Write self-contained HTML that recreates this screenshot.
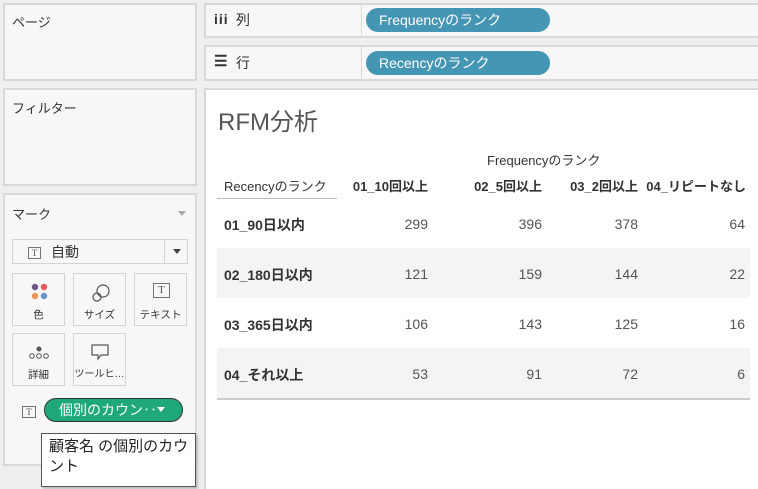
<!DOCTYPE html><html><head><meta charset="utf-8"><style>
*{box-sizing:border-box;margin:0;padding:0}
html,body{width:758px;height:489px;overflow:hidden}
body{background:#efefef;font-family:"Liberation Sans","Noto Sans CJK JP",sans-serif;color:#333;position:relative}
.b{position:absolute;background:#f7f7f7;border:2px solid #d9d9d9}
.t{position:absolute;font-size:13px;color:#333;line-height:18px}
.pill{position:absolute;background:#4596b4;color:#fff;border-radius:12px;font-size:14px;padding:3px 0 0 13px;height:24px;line-height:18px}
.cell{position:absolute;font-size:14px;line-height:20px;white-space:nowrap}
.btn{position:absolute;width:53px;height:53px;background:#f7f7f7;border:1px solid #d4d4d4;font-size:11px;text-align:center}
.lbl{position:absolute;left:0;right:0;top:34px;white-space:nowrap;font-size:10.5px;line-height:14px}
.ti{display:inline-block;width:13px;height:12px;border:1px solid #777;font-size:9px;line-height:10px;text-align:center;font-family:"Liberation Serif",serif;color:#555;vertical-align:middle}
.n{text-align:right;color:#555}
</style></head><body>
<div class="b" style="left:3px;top:3px;width:194px;height:78px"></div><div class="t" style="left:12px;top:14px">ページ</div>
<div class="b" style="left:3px;top:88px;width:194px;height:98px"></div><div class="t" style="left:12px;top:100px">フィルター</div>
<div class="b" style="left:3px;top:193px;width:194px;height:273px"></div>
<div class="t" style="left:12px;top:206px">マーク</div>
<div style="position:absolute;left:178px;top:211px;border:4px solid transparent;border-top:5px solid #aaa"></div>
<div style="position:absolute;left:12px;top:239px;width:176px;height:25px;border:1px solid #d4d4d4;background:#f7f7f7"></div>
<div style="position:absolute;left:164px;top:240px;width:1px;height:23px;background:#d4d4d4"></div>
<div style="position:absolute;left:173px;top:249px;border:4px solid transparent;border-top:5px solid #444"></div>
<div class="t" style="left:28px;top:243px"><span class="ti">T</span></div><div class="t" style="left:51px;top:243px;font-size:14px">自動</div>
<div class="btn" style="left:12px;top:273px"><svg style="position:absolute;left:18px;top:9px" width="18" height="18"><circle cx="4" cy="4" r="3.2" fill="#6b5b8c"/><circle cx="13" cy="4" r="3.2" fill="#e05a60"/><circle cx="4" cy="13" r="3.2" fill="#e59a5a"/><circle cx="13" cy="13" r="3.2" fill="#6a93c7"/></svg><div class="lbl">色</div></div>
<div class="btn" style="left:73px;top:273px"><svg style="position:absolute;left:17px;top:9px" width="20" height="20" fill="none" stroke="#555" stroke-width="1.2"><circle cx="12" cy="8" r="6"/><circle cx="6" cy="14" r="4"/></svg><div class="lbl">サイズ</div></div>
<div class="btn" style="left:134px;top:273px"><div style="position:absolute;left:18px;top:9px;width:17px;height:15px;border:1px solid #777;font-family:'Liberation Serif',serif;font-size:11px;line-height:13px;color:#555">T</div><div class="lbl">テキスト</div></div>
<div class="btn" style="left:12px;top:333px"><svg style="position:absolute;left:15px;top:12px" width="22" height="14" fill="none" stroke="#555"><circle cx="11" cy="3" r="2" fill="#555"/><circle cx="4" cy="10" r="2.3"/><circle cx="11" cy="10" r="2.3"/><circle cx="18" cy="10" r="2.3"/></svg><div class="lbl">詳細</div></div>
<div class="btn" style="left:73px;top:333px"><svg style="position:absolute;left:17px;top:10px" width="20" height="18" fill="none" stroke="#555" stroke-width="1.2"><path d="M1 1H17V11H10L7 15V11H1Z"/></svg><div class="lbl" style="font-size:10px">ツールヒ…</div></div>
<div class="t" style="left:22px;top:402px"><span class="ti" style="width:14px">T</span></div>
<div style="position:absolute;left:44px;top:398px;width:139px;height:24px;background:#1fa97a;border:1px solid #333;border-radius:12px;color:#fff;font-size:14px;line-height:18px;padding:2px 0 0 14px;white-space:nowrap">個別のカウン‥</div>
<div style="position:absolute;left:157px;top:407px;border:4px solid transparent;border-top:5px solid #fff"></div>
<div style="position:absolute;left:41px;top:433px;width:155px;height:54px;background:#fff;border:1px solid #555;box-shadow:2px 2px 2px #bbb;font-size:15px;line-height:20px;padding:3px 0 0 7px;color:#222">顧客名 の個別のカウ<br>ント</div>
<div class="b" style="left:204px;top:3px;width:560px;height:35px"></div>
<div style="position:absolute;left:361px;top:5px;width:1px;height:31px;background:#d9d9d9"></div>
<div class="t" style="left:214px;top:10px;font-size:14px;font-weight:bold;letter-spacing:1px">iii</div><div class="t" style="left:236px;top:11px;font-size:14px">列</div>
<div class="pill" style="left:366px;top:8px;width:184px">Frequencyのランク</div>
<div class="b" style="left:204px;top:45px;width:560px;height:36px"></div>
<div style="position:absolute;left:361px;top:47px;width:1px;height:32px;background:#d9d9d9"></div>
<div class="t" style="left:214px;top:53px;font-size:15px;font-weight:bold">☰</div><div class="t" style="left:236px;top:54px;font-size:14px">行</div>
<div class="pill" style="left:366px;top:51px;width:184px">Recencyのランク</div>
<div style="position:absolute;left:204px;top:88px;width:560px;height:410px;background:#fff;border:2px solid #d9d9d9"></div>
<div class="t" style="left:218px;top:108px;font-size:24px;line-height:30px;color:#555">RFM分析</div>
<div class="cell" style="left:487px;top:151px;font-size:13px">Frequencyのランク</div>
<div class="cell" style="left:224px;top:177px;font-size:13px">Recencyのランク</div>
<div style="position:absolute;left:217px;top:198px;width:120px;height:1px;background:#bbb"></div>
<div style="position:absolute;left:217px;top:248px;width:533px;height:50px;background:#f4f4f4"></div>
<div style="position:absolute;left:217px;top:348px;width:533px;height:50px;background:#f4f4f4"></div>
<div style="position:absolute;left:217px;top:398px;width:533px;height:2px;background:#ccc"></div>
<div class="cell" style="left:340px;top:177px;width:88px;text-align:right;font-weight:bold;font-size:13px">01_10回以上</div>
<div class="cell" style="left:440px;top:177px;width:102px;text-align:right;font-weight:bold;font-size:13px">02_5回以上</div>
<div class="cell" style="left:540px;top:177px;width:98px;text-align:right;font-weight:bold;font-size:13px">03_2回以上</div>
<div class="cell" style="left:640px;top:177px;width:106px;text-align:right;font-weight:bold;font-size:13px">04_リピートなし</div>
<div class="cell" style="left:224px;top:215px;font-weight:bold">01_90日以内</div>
<div class="cell" style="left:224px;top:265px;font-weight:bold">02_180日以内</div>
<div class="cell" style="left:224px;top:315px;font-weight:bold">03_365日以内</div>
<div class="cell" style="left:224px;top:365px;font-weight:bold">04_それ以上</div>
<div class="cell n" style="left:348px;top:214px;width:80px">299</div><div class="cell n" style="left:440px;top:214px;width:102px">396</div><div class="cell n" style="left:540px;top:214px;width:98px">378</div><div class="cell n" style="left:640px;top:214px;width:105px">64</div>
<div class="cell n" style="left:348px;top:264px;width:80px">121</div><div class="cell n" style="left:440px;top:264px;width:102px">159</div><div class="cell n" style="left:540px;top:264px;width:98px">144</div><div class="cell n" style="left:640px;top:264px;width:105px">22</div>
<div class="cell n" style="left:348px;top:314px;width:80px">106</div><div class="cell n" style="left:440px;top:314px;width:102px">143</div><div class="cell n" style="left:540px;top:314px;width:98px">125</div><div class="cell n" style="left:640px;top:314px;width:105px">16</div>
<div class="cell n" style="left:348px;top:364px;width:80px">53</div><div class="cell n" style="left:440px;top:364px;width:102px">91</div><div class="cell n" style="left:540px;top:364px;width:98px">72</div><div class="cell n" style="left:640px;top:364px;width:105px">6</div>
</body></html>
